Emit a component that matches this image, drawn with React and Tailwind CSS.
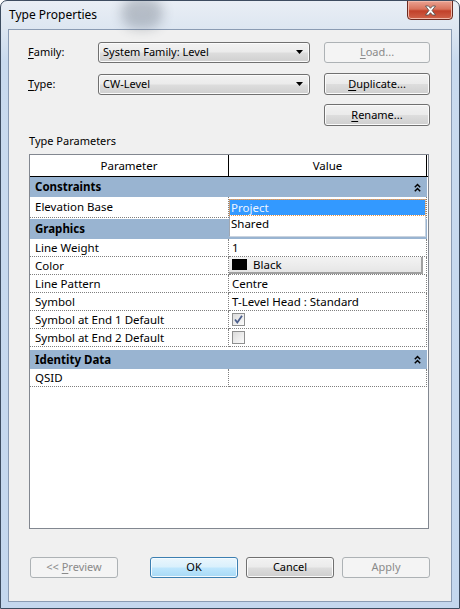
import React from "react";

const FONT = { fontFamily: '"Noto Sans", "Liberation Sans", sans-serif' };

const normalBtn =
  "rounded-[3px] border border-[#707070] bg-[linear-gradient(180deg,#f2f2f2_0%,#ebebeb_48%,#dddddd_52%,#cfcfcf_100%)] shadow-[inset_0_0_0_1px_#fbfbfb] text-black";
const disabledBtn =
  "rounded-[3px] border border-[#adb2b5] bg-[#f4f4f4] text-[#8a8a8a]";
const defaultBtn =
  "rounded-[3px] border border-[#3c7fb1] bg-[linear-gradient(180deg,#eaf6fd_0%,#d9f0fc_48%,#bee6fd_52%,#a7d9f5_100%)] shadow-[inset_0_0_0_1px_#f4fbff] text-black";

const Combo = ({ value }) => (
  <div
    className={`flex h-[21px] w-[212px] items-center pl-[4px] pr-[6px] text-[11px] ${normalBtn}`}
  >
    <span className="flex-1 text-[#000]">{value}</span>
    <svg width="7" height="4" viewBox="0 0 7 4">
      <path d="M0 0H7L3.5 4Z" fill="#000" />
    </svg>
  </div>
);

const ChevronUp = () => (
  <svg width="7" height="9" viewBox="0 0 7 9" className="mr-[6px]">
    <path d="M0.8 4.2L3.5 1.5L6.2 4.2M0.8 8.2L3.5 5.5L6.2 8.2" fill="none" stroke="#000" strokeWidth="1.5" />
  </svg>
);

const GroupRow = ({ label, pad = "", h = "h-[19px]" }) => (
  <div className={pad}>
    <div className={`flex ${h} w-[397px] items-center justify-between bg-[#99b4d1] pl-[5px]`}>
      <span className="text-[11.5px] font-bold text-black">{label}</span>
      <ChevronUp />
    </div>
  </div>
);

const Checkbox = ({ checked }) => (
  <div className="flex h-[13px] w-[13px] items-center justify-center border border-[#8e8f8f] bg-[linear-gradient(135deg,#dcdcdc,#fbfbfb)]">
    {checked && (
      <svg width="11" height="11" viewBox="0 0 11 11">
        <path d="M2 5.5L4.3 8.5L9 1.8" fill="none" stroke="#4c5f8c" strokeWidth="1.8" />
      </svg>
    )}
  </div>
);

const DataRow = ({ label, children, h = "h-[18px]" }) => (
  <div className={`flex ${h} text-[11.5px] text-black`}>
    <div className="flex w-[199px] items-center border-r border-b border-dotted border-[#7f7f7f] pl-[5px]">
      {label}
    </div>
    <div className="flex w-[198px] items-center border-r border-b border-dotted border-[#7f7f7f] pl-[3px]">
      {children}
    </div>
  </div>
);

export default function App() {
  return (
    <div style={FONT} className="h-[609px] w-[460px] bg-white">
      <div className="relative flex h-[609px] w-[460px] flex-col overflow-hidden rounded-t-[7px] border border-[#3d4c60] bg-[linear-gradient(180deg,#e9eef5_0px,#dde6f1_28px,#c9daee_60px,#c4d7ee_100%)]">
        {/* glass smudge behind the caption */}
        <div className="absolute left-[120px] top-[-4px] h-[32px] w-[42px] rounded-full bg-[#4b5563] opacity-30 blur-[6px]" />
        <div className="relative flex h-[28px] items-start">
          <span className="mt-[6px] pl-[8px] text-[12px] leading-[16px] text-black">Type Properties</span>
          <div className="ml-auto mr-[6px] mt-[-1px] flex h-[20px] w-[46px] items-center justify-center rounded-b-[4px] border border-[#6b2a20] bg-[linear-gradient(180deg,#eba292_0%,#d9735c_45%,#c2412a_55%,#d0634a_100%)] shadow-[inset_0_0_0_1px_#f2b7a8]">
            <svg width="13" height="11" viewBox="0 0 13 11">
              <path
                d="M1.5 1H4.5L6.5 3.3L8.5 1H11.5L8 5.5L11.5 10H8.5L6.5 7.7L4.5 10H1.5L5 5.5Z"
                fill="#fff"
                stroke="#4b4b4b"
                strokeWidth="0.8"
                strokeLinejoin="round"
              />
            </svg>
          </div>
        </div>

        <div className="mx-[7px] h-[573px] border border-[#8a9bb3] bg-[#f0f0f0] text-[11px] text-black">
          <div className="pl-[19px] pt-[11px]">
            <div className="flex h-[22px] items-center">
              <span className="w-[70px]">
                <u className="underline-offset-2">F</u>amily:
              </span>
              <Combo value="System Family: Level" />
              <button className={`ml-[14px] h-[21px] w-[106px] ${disabledBtn}`}>
                <u className="underline-offset-2">L</u>oad...
              </button>
            </div>
            <div className="mt-[10px] flex h-[22px] items-center">
              <span className="w-[70px]">
                <u className="underline-offset-2">T</u>ype:
              </span>
              <Combo value="CW-Level" />
              <button className={`ml-[14px] h-[22px] w-[106px] ${normalBtn}`}>
                <u className="underline-offset-2">D</u>uplicate...
              </button>
            </div>
            <div className="mt-[9px] flex h-[22px] items-center">
              <button className={`ml-[296px] h-[22px] w-[106px] ${normalBtn}`}>
                <u className="underline-offset-2">R</u>ename...
              </button>
            </div>
          </div>

          <div className="pl-[20px]">
            <div className="mt-[8px] leading-[14px]">Type Parameters</div>
            <div className="relative mt-[6px] h-[375px] w-[400px] border border-[#828790] bg-white">
              <div className="flex h-[22px] border-b border-black text-[11.5px]">
                <div className="flex w-[199px] items-center justify-center border-r border-black">Parameter</div>
                <div className="flex w-[198px] items-center justify-center border-r border-black">Value</div>
              </div>
              <GroupRow label="Constraints" h="h-[20px]" />
              <DataRow label="Elevation Base" h="h-[21px]" />
              <GroupRow label="Graphics" pad="pt-[1px]" h="h-[20px]" />
              <DataRow label="Line Weight">1</DataRow>
              <DataRow label="Color">
                <div className="-ml-[3px] flex h-full w-full items-center border-r-2 border-b-2 border-[#a0a0a0] bg-[linear-gradient(180deg,#f3f3f3,#e6e6e6)] pl-[3px]">
                  <span className="mr-[6px] h-[11px] w-[15px] bg-black" />
                  Black
                </div>
              </DataRow>
              <DataRow label="Line Pattern">Centre</DataRow>
              <DataRow label="Symbol">T-Level Head : Standard</DataRow>
              <DataRow label="Symbol at End 1 Default">
                <Checkbox checked />
              </DataRow>
              <DataRow label="Symbol at End 2 Default">
                <Checkbox />
              </DataRow>
              <GroupRow label="Identity Data" pad="pt-[3px]" />
              <DataRow label="QSID" />

              {/* open dropdown of Elevation Base */}
              <div className="absolute left-[199px] top-[44px] h-[38px] w-[197px] border border-[#9fa7b3] border-b-[#c9d3df] border-r-[#c9d3df] bg-white text-[11.5px]">
                <div className="flex h-[15px] items-center bg-[#3399ff] pl-[1px] text-[#eef5ff] outline-1 outline-dotted outline-[#e8954a]">
                  Project
                </div>
                <div className="flex h-[18px] items-center pl-[1px] text-black">Shared</div>
              </div>
            </div>
          </div>

          <div className="mt-[28px] flex pl-[21px]">
            <button className={`h-[21px] w-[88px] ${disabledBtn}`}>
              &lt;&lt; <u className="underline-offset-2">P</u>review
            </button>
            <button className={`ml-[32px] h-[21px] w-[88px] ${defaultBtn}`}>OK</button>
            <button className={`ml-[8px] h-[21px] w-[88px] ${normalBtn}`}>Cancel</button>
            <button className={`ml-[8px] h-[21px] w-[88px] ${disabledBtn}`}>Apply</button>
          </div>
        </div>
      </div>
    </div>
  );
}
